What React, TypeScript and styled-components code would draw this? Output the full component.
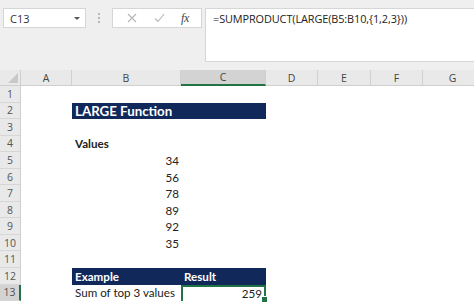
import React from 'react'
import styled, { createGlobalStyle } from 'styled-components'

const GlobalStyle = createGlobalStyle`
  html, body {
    margin: 0;
    padding: 0;
    background: #ffffff;
    overflow: hidden;
  }
`

const COLS = '21px 51px 109px 85px 52px 53px 52px 60px'
const ROW_H = 16.55

const Page = styled.div`
  width: 474px;
  height: 303px;
  display: flex;
  flex-direction: column;
  overflow: hidden;
  font-family: Lato, 'Open Sans', sans-serif;
  color: #222;
`

const Toolbar = styled.div`
  height: 70px;
  background: #efefef;
  display: flex;
  align-items: flex-start;
  padding: 8px 0 0 3px;
  box-sizing: border-box;
`

const NameBox = styled.div`
  width: 83px;
  height: 20px;
  box-sizing: border-box;
  background: #fff;
  border: 1px solid #d6d6d6;
  display: flex;
  align-items: center;
  justify-content: space-between;
  padding: 0 5px 0 6px;
  font-family: 'Open Sans', sans-serif;
  font-size: 11px;
  color: #333;
`

const Arrow = styled.span`
  width: 0;
  height: 0;
  border-left: 3px solid transparent;
  border-right: 3px solid transparent;
  border-top: 3px solid #555;
`

const Grip = styled.div`
  width: 26px;
  height: 20px;
  display: flex;
  flex-direction: column;
  align-items: center;
  justify-content: center;
  gap: 2px;
`

const Dot = styled.span`
  width: 2px;
  height: 2px;
  background: #b8b8b8;
`

const FxBox = styled.div`
  width: 90px;
  height: 20px;
  box-sizing: border-box;
  background: #fff;
  border: 1px solid #d6d6d6;
  display: flex;
  align-items: center;
  justify-content: space-around;
  padding: 0 4px 0 6px;
`

const Fx = styled.span`
  font-family: 'Liberation Serif', serif;
  font-style: italic;
  font-size: 12px;
  color: #444;
  letter-spacing: -0.5px;
`

const FormulaBar = styled.div`
  flex: 1;
  height: 54px;
  margin-left: 3px;
  background: #fff;
  border: 1px solid #d6d6d6;
  border-right: none;
  box-sizing: border-box;
  padding: 2px 0 0 7px;
  font-family: 'Open Sans', sans-serif;
  font-size: 10.9px;
  color: #222;
  letter-spacing: -0.1px;
`

const Sheet = styled.div`
  display: flex;
  flex-direction: column;
`

const Row = styled.div<{ $h: number }>`
  display: grid;
  grid-template-columns: ${COLS};
  height: ${({ $h }) => $h}px;
`

const ColHead = styled.div<{ $sel?: boolean }>`
  background: ${({ $sel }) => ($sel ? '#d3d3d3' : '#e9e9e9')};
  border-right: 1px solid #d0d0d0;
  border-bottom: ${({ $sel }) => ($sel ? '2px solid #217346' : '1px solid #cfcfcf')};
  box-sizing: border-box;
  display: flex;
  align-items: center;
  justify-content: center;
  font-family: 'Open Sans', sans-serif;
  font-size: 10.5px;
  color: #444;
`

const Corner = styled.div`
  background: #e9e9e9;
  border-right: 1px solid #cfcfcf;
  border-bottom: 1px solid #cfcfcf;
  box-sizing: border-box;
  position: relative;
  &::after {
    content: '';
    position: absolute;
    right: 2px;
    bottom: 2px;
    border-left: 10px solid transparent;
    border-bottom: 10px solid #c8c8c8;
  }
`

const RowHead = styled.div<{ $sel?: boolean }>`
  background: ${({ $sel }) => ($sel ? '#d3d3d3' : '#e9e9e9')};
  border-right: ${({ $sel }) => ($sel ? '2px solid #217346' : '1px solid #cfcfcf')};
  border-bottom: 1px solid #d6d6d6;
  box-sizing: border-box;
  display: flex;
  align-items: center;
  justify-content: center;
  font-family: 'Open Sans', sans-serif;
  font-size: 10.5px;
  color: #555;
`

const Cell = styled.div<{ $span?: number; $fill?: boolean; $bold?: boolean; $right?: boolean; $active?: boolean; $big?: boolean }>`
  grid-column: span ${({ $span }) => $span ?? 1};
  background: ${({ $fill }) => ($fill ? '#10295a' : '#fff')};
  color: ${({ $fill }) => ($fill ? '#fff' : '#222')};
  font-weight: ${({ $bold }) => ($bold ? 700 : 400)};
  font-size: ${({ $big }) => ($big ? '13.3px' : '11.6px')};
  display: flex;
  align-items: center;
  justify-content: ${({ $right }) => ($right ? 'flex-end' : 'flex-start')};
  padding: 0 2px 0 3px;
  box-sizing: border-box;
  white-space: nowrap;
  overflow: visible;
  position: relative;
  ${({ $active }) =>
    $active &&
    `
    border: 2px solid #217346;
    border-bottom: none;
    &::after {
      content: '';
      position: absolute;
      right: -4px;
      bottom: -2px;
      width: 5px;
      height: 5px;
      background: #217346;
      border: 1px solid #fff;
    }
  `}
`

const Blank = styled.div``

const cols = ['A', 'B', 'C', 'D', 'E', 'F', 'G']

type CellDef = { text?: string; span?: number; fill?: boolean; bold?: boolean; right?: boolean; active?: boolean; big?: boolean }

const rows: Record<number, CellDef[]> = {
  2: [{}, { text: 'LARGE Function', span: 2, fill: true, bold: true, big: true }],
  4: [{}, { text: 'Values', bold: true }],
  5: [{}, { text: '34', right: true }],
  6: [{}, { text: '56', right: true }],
  7: [{}, { text: '78', right: true }],
  8: [{}, { text: '89', right: true }],
  9: [{}, { text: '92', right: true }],
  10: [{}, { text: '35', right: true }],
  12: [{}, { text: 'Example', fill: true, bold: true }, { text: 'Result', fill: true, bold: true }],
  13: [{}, { text: 'Sum of top 3 values' }, { text: '259', right: true, active: true }],
}

const SheetRow = ({ n }: { n: number }) => {
  const defs = rows[n] ?? []
  return (
    <Row $h={ROW_H}>
      <RowHead $sel={n === 13}>{n}</RowHead>
      {defs.map((d, i) =>
        d.text === undefined ? (
          <Blank key={i} />
        ) : (
          <Cell key={i} $span={d.span} $fill={d.fill} $bold={d.bold} $right={d.right} $active={d.active} $big={d.big}>
            {d.text}
          </Cell>
        )
      )}
    </Row>
  )
}

const App = () => (
  <Page>
    <GlobalStyle />
    <Toolbar>
      <NameBox>
        C13
        <Arrow />
      </NameBox>
      <Grip>
        <Dot />
        <Dot />
        <Dot />
      </Grip>
      <FxBox>
        <svg width="10" height="10" viewBox="0 0 10 10">
          <path d="M1 1 L9 9 M9 1 L1 9" stroke="#b5b5b5" strokeWidth="1.1" fill="none" />
        </svg>
        <svg width="11" height="10" viewBox="0 0 11 10">
          <path d="M1 5.5 L4 8.5 L10 1" stroke="#b5b5b5" strokeWidth="1.1" fill="none" />
        </svg>
        <Fx>fx</Fx>
      </FxBox>
      <FormulaBar>=SUMPRODUCT(LARGE(B5:B10,{'{1,2,3}'}))</FormulaBar>
    </Toolbar>
    <Sheet>
      <Row $h={16}>
        <Corner />
        {cols.map(c => (
          <ColHead key={c} $sel={c === 'C'}>{c}</ColHead>
        ))}
      </Row>
      {Array.from({ length: 13 }, (_, i) => (
        <SheetRow key={i} n={i + 1} />
      ))}
    </Sheet>
  </Page>
)

export default App
